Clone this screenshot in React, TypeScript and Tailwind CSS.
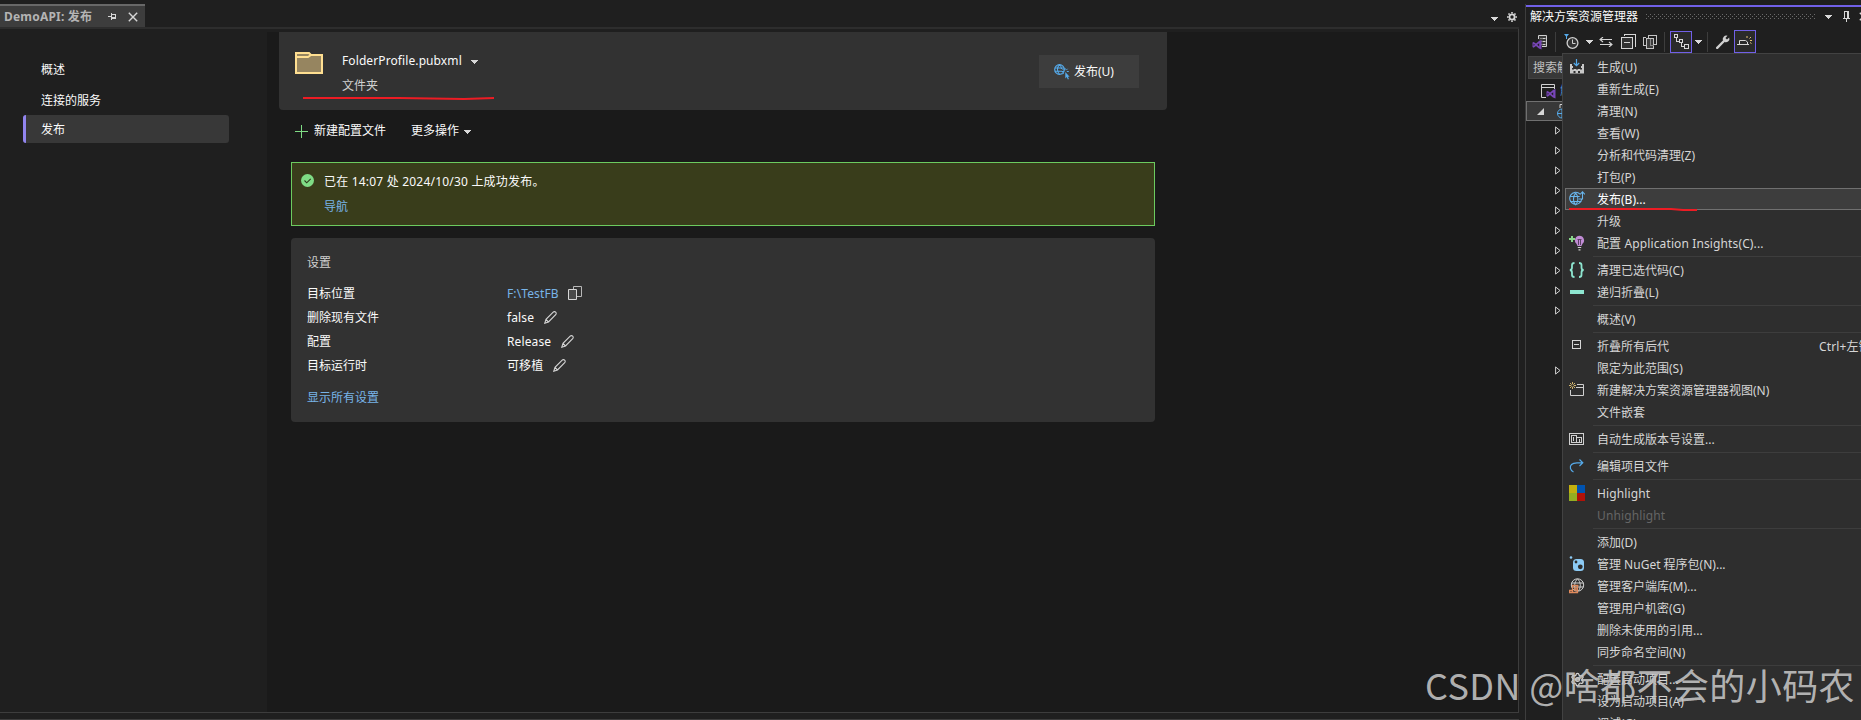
import React from "react";
import { Settings } from "lucide-react";

type IconProps = { className?: string };

const Caret = ({ className = "" }: IconProps) => (
  <svg className={className} width="7" height="4" viewBox="0 0 7 4" shapeRendering="crispEdges">
    <path d="M0 0h7L3.5 4z" fill="#d8d8d8" />
  </svg>
);

const Folder = () => (
  <svg width="28" height="22" viewBox="0 0 28 22">
    <path d="M1 1h13l2 2h11v18H1z" fill="#968560" stroke="#ffdf91" strokeWidth="2" />
    <path d="M1 5h12l3-2" fill="none" stroke="#ffdf91" strokeWidth="2" />
  </svg>
);

const PublishGlobe = () => (
  <svg width="16" height="16" viewBox="0 0 16 16" fill="none" stroke="#55aaea">
    <circle cx="5.5" cy="5.5" r="4.8" strokeWidth="1.2" />
    <path d="M1 4h9M1 7.2h7M5.5.7C2.8 3.5 2.8 7.6 5.5 10.3M5.5.7C7 2 7.6 3.5 7.5 5" strokeWidth="1.1" />
    <path d="M11 4v2M8.3 4.8l1.4 1.4M13.5 4.8l-1.3 1.4M7.8 7.5h2M14.8 7.5h-2M8.5 10.3l1.2-1.2" />
    <path d="M11.3 8v6.4l1.4-1.3 1.2 2.4 1-.5-1-2.2h1.7z" fill="#55aaea" stroke="none" />
  </svg>
);

const Pencil = () => (
  <svg className="mb-[2px]" width="13" height="13" viewBox="0 0 13 13" fill="none" stroke="#d6d6d6" strokeWidth="1.1">
    <path d="M.8 12.2l1.2-3.8L9.2 1.2a1.600 1.600 0 0 1 2.500 2.400L4.500 11zM2 8.500L4.400 11" />
  </svg>
);

const Copy = () => (
  <svg className="mb-[2px]" width="14" height="14" viewBox="0 0 14 14" stroke="#d6d6d6" fill="none">
    <path d="M5.5 3V.5h8v10H9" stroke="#b8b8b8" />
    <path d="M.5 3.5h8v10h-8z" fill="#4a4a4a" />
  </svg>
);

const Pin = ({ className = "" }: IconProps) => (
  <svg className={className} width="9" height="9" viewBox="0 0 9 9" fill="none" stroke="#d6d6d6" shapeRendering="crispEdges">
    <path d="M0 4.5h3M3.5 1v7M3.5 2.5h4v4h-4M4 5.5h4" />
  </svg>
);

const PinUp = () => (
  <svg width="9" height="11" viewBox="0 0 9 11" fill="none" stroke="#d6d6d6" shapeRendering="crispEdges">
    <path d="M1.5 7V.5h4V7M4.500 1v6M0 7.5h7M3.5 8v3" />
  </svg>
);

const Gear = ({ size = 10 }: { size?: number }) => (
  <svg width={size} height={size} viewBox="0 0 10 10" fill="none" stroke="#d6d6d6">
    <circle cx="5" cy="5" r="2.6" strokeWidth="1.8" />
    <path d="M5 0v1.6M5 8.4V10M0 5h1.6M8.4 5H10M1.5 1.5l1.1 1.1M7.4 7.4l1.1 1.1M1.5 8.5l1.1-1.1M7.4 2.6l1.1-1.1" strokeWidth="1.6" />
  </svg>
);

const VsMark = "M9.5 0v9.5L7 8.4 4 5.9 1.6 7.7.5 7V2.6l1.1-.7L4 3.6 7 1.1zM7.2 3.2L5.2 4.8l2 1.6zM1.6 3.7v2.2l1.2-1.1z";

const SolutionPage = () => (
  <svg width="16" height="16" viewBox="0 0 16 16">
    <path d="M6.5 5V1.5h8v11H10" fill="#3a3a3a" stroke="#d0d0d0" />
    <path d="M8.5 4.5h1M8.5 7.5h1M8.5 10.5h1M10.5 4.5h3M10.5 7.5h3M10.5 10.5h3" stroke="#d0d0d0" />
    <path d={VsMark} transform="translate(0 6)" fill="#7846b8" fillRule="evenodd" />
  </svg>
);

const ClockFilter = () => (
  <svg width="16" height="16" viewBox="0 0 16 16" fill="none">
    <path d="M0 0h5L3 2.5V5H2V2.5z" fill="#55aaea" />
    <circle cx="8.500" cy="9" r="5.400" stroke="#d0d0d0" strokeWidth="1.3" fill="#333" />
    <path d="M8.500 5.5v4h3" stroke="#d0d0d0" />
  </svg>
);

const Sync = () => (
  <svg width="14" height="10" viewBox="0 0 14 10" fill="none" stroke="#d6d6d6" strokeWidth="1.1">
    <path d="M13 2.5H1M4 0L1 2.5 4 5M1 7.5h12M10 5l3 2.5-3 2.5" />
  </svg>
);

const CollapseAll = () => (
  <svg width="15" height="15" viewBox="0 0 15 15" fill="none" stroke="#d6d6d6" shapeRendering="crispEdges">
    <path d="M3 1.5V.5h11.5v12h-1" />
    <path d="M.5 3.5h11v11H.5z" fill="#333" />
    <path d="M3 8.5h6" />
  </svg>
);

const ShowAll = () => (
  <svg width="14" height="14" viewBox="0 0 14 14" fill="none" stroke="#c4c4c4" shapeRendering="crispEdges">
    <path d="M3 10.5H.5v-8H3M5 3.5V.5h8.5v9H11" />
    <path d="M3.5 3.5h7v10h-7z" fill="#3c3c3c" />
    <path d="M7.5 4v6H11" stroke="#888" />
  </svg>
);

const Nested = () => (
  <svg width="15" height="15" viewBox="0 0 15 15" fill="none" stroke="#d6d6d6" shapeRendering="crispEdges">
    <path d="M.5 .5h3v3h-3zM5.5 5.5h3v3h-3zM10.5 10.5h4v4h-4zM2.5 4v3.5H5M7.5 9v3.5h3" />
  </svg>
);

const Wrench = () => (
  <svg width="14" height="14" viewBox="0 0 14 14" fill="none">
    <path d="M1.2 12.8L7.5 6.5" stroke="#d0d0d0" strokeWidth="2.4" strokeLinecap="round" />
    <path d="M11.5.8a3.6 3.6 0 0 0-4.6 4.6l1.7 1.7a3.6 3.6 0 0 0 4.6-4.6L11 4.5 9.4 3z" fill="#d0d0d0" />
  </svg>
);

const Preview = () => (
  <svg width="16" height="11" viewBox="0 0 16 11" fill="none">
    <path d="M0 8.500h12" stroke="#d6d6d6" />
    <path d="M2.5 8V4.500h6l2 1.5v2" stroke="#d6d6d6" />
    <path d="M10 0v2M12.5 2.5L14 1M13 4.500h2M13 6.500l1.5 1" stroke="#e3c374" />
  </svg>
);

const Build = () => (
  <svg width="16" height="16" viewBox="0 0 16 16">
    <path d="M1 5v9.5h14V5h-2v2h-1v3H4V7H3V5z" fill="#c8c8c8" />
    <path d="M3 9h2v1.5H3zM7 9h2v1.5H7zM11 9h2v1.5h-2zM4.500 12h2v2h-2zM9 12h2v2H9z" fill="#2e2e2e" />
    <path d="M7.500 0v6.500M4.800 4l2.700 2.700L10.200 4" fill="none" stroke="#55aaea" strokeWidth="1.2" />
  </svg>
);

const GlobeUp = () => (
  <svg width="16" height="16" viewBox="0 0 16 16" fill="none" stroke="#69b5ec" strokeWidth="1.1">
    <path d="M11 3.100A6 6 0 1 0 12.700 8M1.200 5.500h9.500M1 10.500h11.500M6.700 2.200C3.700 5.500 3.700 10.800 6.700 14M6.700 2.200C9.500 5 9.800 10.500 6.700 14" />
    <path d="M10 8h3.500V1.500M11 3.500l2.500-2.700L16 3.500" />
  </svg>
);

const Insights = () => (
  <svg width="16" height="16" viewBox="0 0 16 16" fill="none">
    <path d="M3 1v6M0 4h6" stroke="#89d68b" strokeWidth="2" />
    <path d="M10.500.8a4.500 4.500 0 0 1 3 7.900l-1 2.300h-4l-1-2.300a4.500 4.500 0 0 1 3-7.900z" fill="#c08cd4" />
    <path d="M8.500 4.500h4M9.500 5v5M11.500 5v5" stroke="#5a3f64" />
    <path d="M8.800 12.500h3.400M9.500 14.800h2" stroke="#d0d0d0" strokeWidth="1.200" />
  </svg>
);

const Braces = () => (
  <svg width="16" height="16" viewBox="0 0 16 16" fill="none" stroke="#8ee6d0" strokeWidth="1.800">
    <path d="M5.500 1C3.500 1 3 1.500 3 3v2.500C3 7 2.500 8 .8 8c1.700 0 2.200 1 2.200 2.500V13c0 1.500.5 2 2.500 2M10 1c2 0 2.500.5 2.500 2v2.500c0 1.500.5 2.500 2.200 2.500-1.700 0-2.200 1-2.200 2.500V13c0 1.500-.5 2-2.500 2" />
  </svg>
);

const Bar = () => (
  <svg width="16" height="16" viewBox="0 0 16 16">
    <path d="M1 6h14v4H1z" fill="#8ee6d0" />
  </svg>
);

const MinusBox = () => (
  <svg width="16" height="16" viewBox="0 0 16 16" fill="none" stroke="#d6d6d6" shapeRendering="crispEdges">
    <path d="M3.500 2.500h8v8h-8zM5 6.500h5" />
  </svg>
);

const NewWindow = () => (
  <svg width="16" height="16" viewBox="0 0 16 16" fill="none">
    <path d="M8 2.500h6.500v11H1.500V8M7 5.500h7.500" stroke="#d0d0d0" />
    <path d="M3.500 0v7M0 3.500h7M1 1l5 5M6 1L1 6" stroke="#e3c374" strokeWidth=".9" />
    <circle cx="3.500" cy="3.500" r="1.300" fill="#2e2e2e" />
  </svg>
);

const Version = () => (
  <svg width="16" height="16" viewBox="0 0 16 16" fill="none" stroke="#d0d0d0" shapeRendering="crispEdges">
    <path d="M.5 2.500h14v11H.5zM2.500 4.500h5v7h-5zM7.500 6.500h5v5h-5zM4.500 6v4M10.500 8v3" />
  </svg>
);

const Redo = () => (
  <svg width="16" height="16" viewBox="0 0 16 16" fill="none" stroke="#55aaea" strokeWidth="1.200">
    <path d="M4.500 14C1 12.500.5 8.500 2.500 6.500 4 5 5.500 4.800 8 4.800h5.500M10.500 1.500l3.300 3.300L10.500 8" />
  </svg>
);

const Squares = () => (
  <svg width="16" height="16" viewBox="0 0 16 16" shapeRendering="crispEdges">
    <path d="M0 0h8v8H0z" fill="#c3b00f" />
    <path d="M8 0h8v8H8z" fill="#0053b0" />
    <path d="M0 8h8v8H0z" fill="#94ae22" />
    <path d="M8 8h8v8H8z" fill="#b11208" />
  </svg>
);

const NuGet = () => (
  <svg width="16" height="16" viewBox="0 0 16 16">
    <circle cx="2" cy="1.500" r="1.300" fill="#8ccbf6" />
    <rect x="4" y="3" width="11" height="12" rx="3.500" fill="#8ccbf6" />
    <circle cx="7" cy="6" r="1.400" fill="#2e2e2e" />
    <circle cx="11.300" cy="10.800" r="2.400" fill="#2e2e2e" />
  </svg>
);

const Library = () => (
  <svg width="16" height="16" viewBox="0 0 16 16" fill="none">
    <circle cx="8.500" cy="7" r="6.200" stroke="#d0d0d0" />
    <path d="M2.500 5h12M3 9h11.500M8.500.8C5 4.500 5.500 8 6 12M8.500.8C12 4 12 9.500 9.500 13" stroke="#d0d0d0" />
    <path d="M3.500 14.500V7.500h6M8.500 8v6.500H.5v-2H3M5 10h3M5 12h3" stroke="#e08a5c" strokeWidth="1.300" />
  </svg>
);

type Item = { label: string; icon?: React.ReactNode; hint?: string; active?: boolean; disabled?: boolean };

const groups: Item[][] = [
  [
    { label: "生成(U)", icon: <Build /> },
    { label: "重新生成(E)" },
    { label: "清理(N)" },
    { label: "查看(W)" },
    { label: "分析和代码清理(Z)" },
    { label: "打包(P)" },
    { label: "发布(B)...", icon: <GlobeUp />, active: true },
    { label: "升级" },
    { label: "配置 Application Insights(C)...", icon: <Insights /> },
  ],
  [
    { label: "清理已选代码(C)", icon: <Braces /> },
    { label: "递归折叠(L)", icon: <Bar /> },
  ],
  [{ label: "概述(V)" }],
  [
    { label: "折叠所有后代", icon: <MinusBox />, hint: "Ctrl+左键单击" },
    { label: "限定为此范围(S)" },
    { label: "新建解决方案资源管理器视图(N)", icon: <NewWindow /> },
    { label: "文件嵌套" },
  ],
  [{ label: "自动生成版本号设置...", icon: <Version /> }],
  [{ label: "编辑项目文件", icon: <Redo /> }],
  [
    { label: "Highlight", icon: <Squares /> },
    { label: "Unhighlight", disabled: true },
  ],
  [
    { label: "添加(D)" },
    { label: "管理 NuGet 程序包(N)...", icon: <NuGet /> },
    { label: "管理客户端库(M)...", icon: <Library /> },
    { label: "管理用户机密(G)" },
    { label: "删除未使用的引用..." },
    { label: "同步命名空间(N)" },
  ],
  [
    { label: "配置启动项目...", icon: <Settings size={15} strokeWidth={2} className="shrink-0" /> },
    { label: "设为启动项目(A)" },
    { label: "调试(G)" },
  ],
];

function ContextMenu() {
  return (
    <div className="absolute left-[1562px] top-[53px] h-[667px] w-[299px] overflow-hidden border-l border-t border-[#424242] bg-[#2e2e2e] pl-[2px] pt-[2px]">
      {groups.map((items, g) => (
        <div key={g}>
          {g > 0 && (
            <div className="h-[5px] pl-7 pt-[2px]">
              <div className="h-px bg-[#3d3d3d]" />
            </div>
          )}
          {items.map((it) => (
            <div
              key={it.label}
              className={
                "flex h-[22px] w-[420px] items-center border whitespace-nowrap " +
                (it.active
                  ? "border-[#707070] bg-[#3d3d3d] text-white"
                  : it.disabled
                    ? "border-transparent text-[#656565]"
                    : "border-transparent text-[#d6d6d6]")
              }
            >
              <span className="ml-[3px] flex w-4 shrink-0 justify-center">{it.icon}</span>
              <span className={"ml-3 w-[222px] shrink-0 pt-[2px] " + (/[a-z]{3}/.test(it.label) ? "tracking-[0.12px]" : "")}>
                {it.label}
              </span>
              {it.hint && <span className="pt-[2px] tracking-[0.15px]">{it.hint}</span>}
            </div>
          ))}
        </div>
      ))}
    </div>
  );
}

const settings = [
  { name: "目标位置", value: "F:\\TestFB", link: true },
  { name: "删除现有文件", value: "false" },
  { name: "配置", value: "Release" },
  { name: "目标运行时", value: "可移植" },
];

const treeRows = [true, true, true, true, true, true, true, true, true, true, false, false, true];

function Editor() {
  return (
    <div className="flex w-[1519px] shrink-0 flex-col">
      <div className="flex h-[29px] shrink-0 items-end border-b-2 border-[#2d2d2d]">
        <div className="flex h-[23px] w-[145px] items-center border-t-2 border-[#686868] bg-[#3d3d3d] pl-1">
          <span className="w-[104px] font-bold tracking-[0.2px] text-[#b4b4b4] leading-[20px]">DemoAPI: 发布</span>
          <Pin />
          <svg className="ml-[11px]" width="10" height="10" viewBox="0 0 10 10" stroke="#d6d6d6" strokeWidth="1.400">
            <path d="M.8.8l8.400 8.400M9.200.8L.8 9.200" />
          </svg>
        </div>
        <div className="ml-auto mr-[2px] flex h-5 items-center gap-[9px]">
          <Caret className="mt-[3px]" />
          <Gear />
        </div>
      </div>
      <div className="flex h-[684px] shrink-0 border-b border-r border-[#3d3d3d]">
        <nav className="w-[267px] shrink-0 pl-[23px] pt-[26px] text-[#fafafa]">
          <div className="flex h-[30px] items-center pl-[18px]">概述</div>
          <div className="flex h-[30px] items-center pl-[18px] pt-px">连接的服务</div>
          <div className="flex h-7 w-[206px] items-center overflow-hidden rounded-[3px] bg-[#383838]">
            <div className="h-full w-[3px] bg-[#9184ee]" />
            <span className="pl-[15px] pt-[2px]">发布</span>
          </div>
        </nav>
        <main className="mt-[3px] grow bg-[#1a1a1a] pl-3 text-[#fafafa]">
          <section className="flex h-[78px] w-[888px] items-start rounded-b-[4px] bg-[#323232] pl-4">
            <div className="pt-5">
              <Folder />
            </div>
            <div className="ml-[19px] pt-[17px]">
              <div className="flex h-6 items-center">
                <span className="w-[129px] tracking-[0.1px]">FolderProfile.pubxml</span>
                <Caret className="mt-[2px]" />
              </div>
              <div className="flex h-[26px] items-center text-[#d0d0d0]">文件夹</div>
            </div>
            <button className="ml-auto mr-7 mt-[23px] flex h-[33px] w-[100px] items-center bg-[#3d3d3d] pl-[15px]">
              <PublishGlobe />
              <span className="ml-1">发布(U)</span>
            </button>
          </section>
          <div className="flex h-[52px] items-center pb-[10px] pl-4">
            <svg width="13" height="13" viewBox="0 0 13 13" stroke="#7fdc85">
              <path d="M6.500 0v13M0 6.500h13" />
            </svg>
            <span className="ml-[6px] w-[97px]">新建配置文件</span>
            <span>更多操作</span>
            <Caret className="ml-[5px] mt-[2px]" />
          </div>
          <section className="ml-3 flex h-16 w-[864px] border border-[#6ccb5f] bg-[#393d1b] pl-[9px]">
            <svg className="mt-[11px]" width="13" height="13" viewBox="0 0 13 13" fill="none">
              <circle cx="6.500" cy="6.500" r="6.500" fill="#7fdc85" />
              <path d="M3.500 6.500l2.200 2.300 4-4" stroke="#2c3a1a" strokeWidth="1.100" />
            </svg>
            <div className="ml-[10px] pt-[6px]">
              <div className="flex h-[25px] items-center tracking-[0.2px]">已在 14:07 处 2024/10/30 上成功发布。</div>
              <div className="flex h-[25px] items-center text-[#78b4e8]">导航</div>
            </div>
          </section>
          <section className="ml-3 mt-3 h-[184px] w-[864px] rounded-[4px] bg-[#323232] px-4 pt-[13px]">
            <div className="flex h-6 items-center text-[#d0d0d0]">设置</div>
            <div className="mt-[7px]">
              {settings.map((s) => (
                <div key={s.name} className="flex h-6 items-center">
                  <span className="w-[200px]">{s.name}</span>
                  <span className={s.link ? "mr-[9px] tracking-[0.12px] text-[#78b4e8]" : "mr-[10px] tracking-[0.12px]"}>{s.value}</span>
                  {s.link ? <Copy /> : <Pencil />}
                </div>
              ))}
            </div>
            <div className="mt-2 flex h-6 items-center text-[#78b4e8]">显示所有设置</div>
          </section>
        </main>
      </div>
      <div className="mt-[6px] h-px bg-[#3d3d3d]" />
    </div>
  );
}

function Explorer() {
  return (
    <aside className="ml-[6px] mt-1 flex w-[336px] shrink-0 flex-col overflow-hidden border-l border-[#3d3d3d] text-[#d6d6d6]">
      <div className="mt-px h-[2px] shrink-0 bg-[#7160e8]" />
      <div className="flex h-[19px] shrink-0 items-center pl-1">
        <span className="w-[116px] shrink-0 text-[#fafafa]">解决方案资源管理器</span>
        <svg className="shrink-0" width="170" height="5" viewBox="0 0 170 5" shapeRendering="crispEdges">
          <defs>
            <pattern id="grip" width="4" height="4" patternUnits="userSpaceOnUse">
              <path d="M0 0h1v1H0zM2 2h1v1H2z" fill="#6a6a6a" />
            </pattern>
          </defs>
          <rect width="170" height="5" fill="url(#grip)" />
        </svg>
        <Caret className="ml-[9px] shrink-0" />
        <span className="ml-[11px] shrink-0">
          <PinUp />
        </span>
        <svg className="ml-[7px] shrink-0" width="9" height="9" viewBox="0 0 9 9" stroke="#d6d6d6" strokeWidth="1.400">
          <path d="M.8.8l7.400 7.400M8.200.8L.8 8.200" />
        </svg>
      </div>
      <div className="mt-[4px] flex h-[23px] shrink-0 items-center pl-[6px]">
        <SolutionPage />
        <div className="ml-[7px] mr-2 h-5 w-px bg-[#3d3d3d]" />
        <ClockFilter />
        <Caret className="ml-[6px]" />
        <span className="ml-[6px]">
          <Sync />
        </span>
        <span className="ml-2">
          <CollapseAll />
        </span>
        <span className="ml-[7px]">
          <ShowAll />
        </span>
        <div className="ml-[7px] mr-[5px] h-5 w-px bg-[#3d3d3d]" />
        <div className="flex h-[22px] w-[22px] items-center justify-center border border-[#7160e8] bg-[#2a2a2a]">
          <Nested />
        </div>
        <Caret className="ml-[3px]" />
        <div className="ml-[5px] mr-2 h-5 w-px bg-[#3d3d3d]" />
        <Wrench />
        <div className="ml-[4px] flex h-[23px] w-[22px] items-center justify-center border border-[#7160e8] bg-[#2a2a2a]">
          <Preview />
        </div>
      </div>
      <div className="ml-[2px] mt-[3px] flex h-[23px] w-[330px] shrink-0 items-center border border-[#424242] bg-[#383838] pl-1 text-[#c0c0c0]">
        搜索解决方案资源管理器
      </div>
      <div className="mt-[2px] flex h-5 shrink-0 items-center pl-[15px]">
        <svg width="15" height="15" viewBox="0 0 15 15" fill="none">
          <path d="M5 13.500H.5V.5h13V5M.5 3.500h13" stroke="#d0d0d0" />
          <path d={VsMark} transform="translate(5 5)" fill="#7846b8" fillRule="evenodd" />
        </svg>
        <span className="ml-1 text-[#4a88c8]">解决方案</span>
      </div>
      <div className="flex h-5 shrink-0 items-center border border-[#707070] bg-[#383838] pl-[10px]">
        <svg width="7" height="7" viewBox="0 0 7 7">
          <path d="M7 0v7H0z" fill="#d6d6d6" />
        </svg>
        <svg className="ml-[13px]" width="15" height="15" viewBox="0 0 15 15" fill="none">
          <path d="M3 4V.5h11V9" stroke="#d0d0d0" />
          <circle cx="5" cy="9.500" r="4.500" stroke="#55aaea" />
          <path d="M0 9.500h10M5 5v9" stroke="#55aaea" />
        </svg>
      </div>
      {treeRows.map((open, i) => (
        <div key={i} className="flex h-5 shrink-0 items-center pb-px pl-[29px]">
          {open && (
            <svg width="6" height="9" viewBox="0 0 6 9" fill="none" stroke="#d0d0d0">
              <path d="M.6.9v7.200L5 4.500z" />
            </svg>
          )}
        </div>
      ))}
    </aside>
  );
}

export default function App() {
  return (
    <div className="relative flex h-[720px] w-[1861px] overflow-hidden bg-[#1f1f1f] font-['Noto_Sans','Noto_Sans_CJK_SC',sans-serif] text-[12px] leading-[18px] whitespace-nowrap">
      <Editor />
      <Explorer />
      <ContextMenu />
      <svg className="absolute left-[302px] top-[96px]" width="193" height="5" fill="none" stroke="#ed1c24" strokeWidth="2">
        <path d="M1 2h96l65 1 30-1" />
      </svg>
      <svg className="absolute left-[1568px] top-[207px]" width="131" height="5" fill="none" stroke="#ed1c24" strokeWidth="2">
        <path d="M1 2h102l12 1h14" />
      </svg>
      <div className="absolute left-[1425px] top-[657px] font-['Noto_Sans_CJK_SC',sans-serif] text-[36px] leading-[54px] tracking-[0.4px] text-[#c4c4c4]/90">
        CSDN @啥都不会的小码农
      </div>
    </div>
  );
}
